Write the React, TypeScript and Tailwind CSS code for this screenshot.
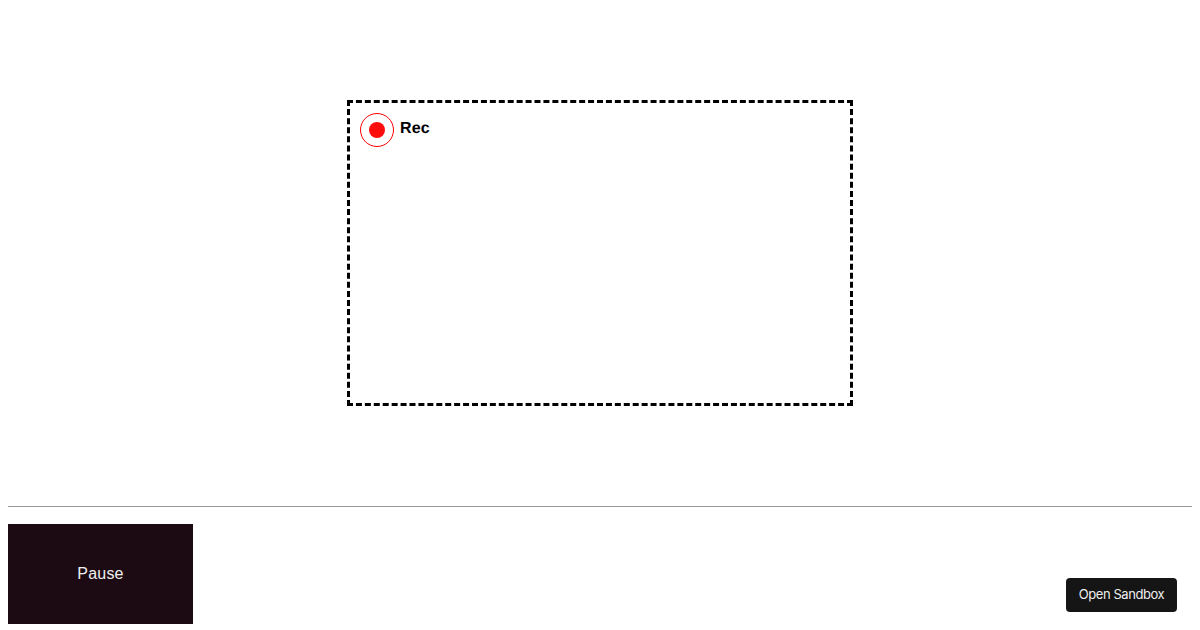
export default function App() {
  return (
    <div className="relative h-[630px] overflow-hidden bg-white px-2 pt-[100px] font-['Liberation_Sans',Arial,sans-serif] text-black [text-rendering:geometricPrecision]">
      <div className="mx-auto h-[306px] w-[506px] border-[3px] border-dashed border-black p-[10px]">
        <div className="flex items-start gap-[6px]">
          <div className="flex h-[34px] w-[34px] items-center justify-center rounded-full border border-[#ff0000]">
            <div className="h-4 w-4 rounded-full bg-[#ff0d0d]" />
          </div>
          <span className="text-base font-bold leading-[32px] tracking-[0.2px]">Rec</span>
        </div>
      </div>
      <div className="mt-[100px] h-px border-t border-[#999999]" />
      <button className="mt-[17px] block h-[100px] w-[185px] bg-[#1d0b14] text-base tracking-[0.2px] text-[#f0f0f0]">Pause</button>
      <button className="absolute left-[1066px] top-[578px] h-[34px] w-[111px] rounded-[4px] bg-[#151515] font-['Inter',sans-serif] text-[13px] tracking-[-0.45px] text-[#eeeeee]">
        Open Sandbox
      </button>
    </div>
  );
}
